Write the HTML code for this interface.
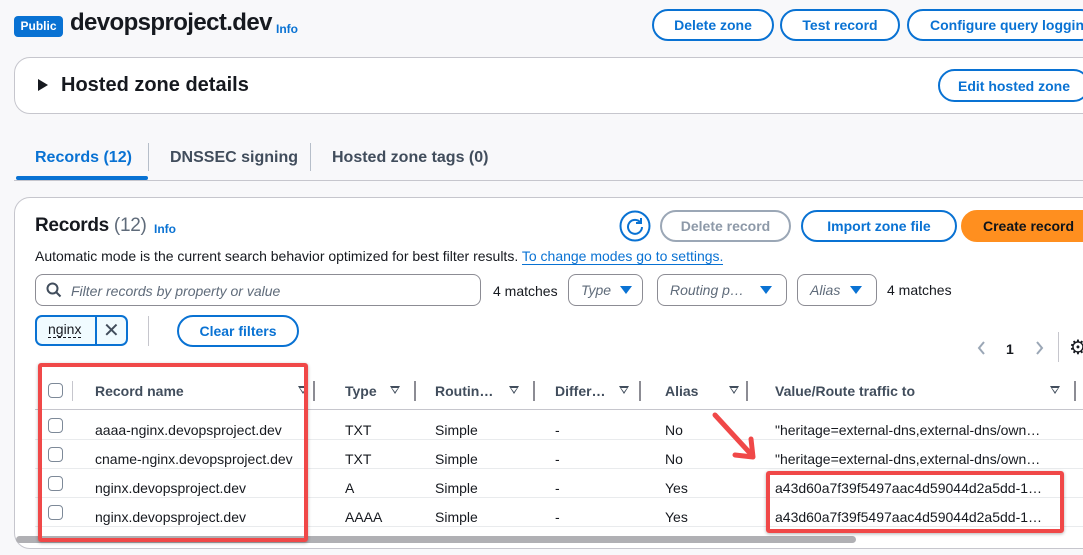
<!DOCTYPE html>
<html><head><meta charset="utf-8"><style>
*{box-sizing:border-box;margin:0;padding:0}
body{width:1083px;height:555px;overflow:hidden;background:#f8f8fa;font-family:"Liberation Sans",sans-serif;color:#16191f;position:relative}
.a{position:absolute;white-space:nowrap}
.btn{position:absolute;border:2px solid #0972d3;border-radius:20px;color:#0972d3;font-weight:bold;font-size:14px;display:flex;align-items:center;justify-content:center;background:#fff}
.card{position:absolute;background:#fff;border:1px solid #c6c6cd;border-radius:16px}
.sel{position:absolute;border:1px solid #8c8c94;border-radius:8px;background:#fff;font-style:italic;color:#5f6b7a;font-size:14px;padding-left:12px;display:flex;align-items:center}
.tri{position:absolute;width:0;height:0;border-left:6px solid transparent;border-right:6px solid transparent;border-top:8px solid #0972d3}
.cb{position:absolute;width:15px;height:15px;border:1.5px solid #7d8998;border-radius:4px;background:#fff}
.th{position:absolute;font-weight:bold;font-size:14px;color:#414d5c;top:383px}
.sep{position:absolute;width:2px;height:20px;background:#8c8c94;top:381px}
.so{position:absolute;top:386px;width:0;height:0;border-left:5px solid transparent;border-right:5px solid transparent;border-top:8px solid #414d5c}
.so::after{content:"";position:absolute;left:-3px;top:-6.5px;border-left:3px solid transparent;border-right:3px solid transparent;border-top:4.5px solid #fff}
.td{position:absolute;font-size:14px;color:#16191f}
.hl{position:absolute;height:1px;background:#e9ebed;left:35px;width:1048px}
</style></head><body>
<div class="a" style="left:14px;top:16px;width:49px;height:21px;background:#0972d3;border-radius:4px;color:#fff;font-size:12px;font-weight:bold;text-align:center;line-height:21px">Public</div>
<div class="a" style="left:70px;top:9px;font-size:24px;font-weight:bold;letter-spacing:-0.6px">devopsproject.dev</div>
<div class="a" style="left:276px;top:22px;font-size:12px;font-weight:bold;color:#0972d3">Info</div>
<div class="btn" style="left:652px;top:9px;width:122px;height:32px">Delete zone</div>
<div class="btn" style="left:780px;top:9px;width:120px;height:32px">Test record</div>
<div class="btn" style="left:907px;top:9px;width:190px;height:32px;justify-content:flex-start;padding-left:21px">Configure query logging</div>

<div class="card" style="left:14px;top:57px;width:1090px;height:57px"></div>
<div class="a" style="left:38px;top:79px;width:0;height:0;border-top:6px solid transparent;border-bottom:6px solid transparent;border-left:10px solid #16191f"></div>
<div class="a" style="left:61px;top:74px;font-size:20px;font-weight:bold">Hosted zone details</div>
<div class="btn" style="left:938px;top:69px;width:152px;height:33px">Edit hosted zone</div>

<div class="a" style="left:35px;top:149px;font-size:16px;font-weight:bold;color:#0972d3">Records (12)</div>
<div class="a" style="left:148px;top:143px;width:1px;height:28px;background:#b6bec9"></div>
<div class="a" style="left:170px;top:149px;font-size:16px;font-weight:bold;color:#414d5c">DNSSEC signing</div>
<div class="a" style="left:310px;top:143px;width:1px;height:28px;background:#b6bec9"></div>
<div class="a" style="left:332px;top:149px;font-size:16px;font-weight:bold;color:#414d5c">Hosted zone tags (0)</div>
<div class="a" style="left:14px;top:180px;width:1069px;height:1px;background:#c6c6cd"></div>
<div class="a" style="left:16px;top:176px;width:132px;height:4px;background:#0972d3;border-radius:2px"></div>

<div class="card" style="left:14px;top:197px;width:1090px;height:352px"></div>
<div class="a" style="left:35px;top:215px;font-size:19px;font-weight:bold;letter-spacing:-0.3px">Records <span style="font-weight:normal;color:#5f6b7a">(12)</span></div>
<div class="a" style="left:154px;top:222px;font-size:12px;font-weight:bold;color:#0972d3">Info</div>
<svg class="a" style="left:619px;top:210px" width="32" height="32" viewBox="0 0 32 32"><circle cx="16" cy="16" r="14.5" fill="#fff" stroke="#0972d3" stroke-width="2"/><path d="M21.5 12.5A7 7 0 1 0 23 17" fill="none" stroke="#0972d3" stroke-width="2"/><path d="M22 8v5h-5" fill="none" stroke="#0972d3" stroke-width="2"/></svg>
<div class="btn" style="left:660px;top:210px;width:131px;height:32px;border-color:#9ba7b6;color:#8d99a8">Delete record</div>
<div class="btn" style="left:801px;top:210px;width:156px;height:32px">Import zone file</div>
<div class="btn" style="left:961px;top:210px;width:140px;height:32px;background:#ff8f1f;border-color:#ff8f1f;color:#0f141a;justify-content:flex-start;padding-left:20px">Create record</div>
<div class="a" style="left:35px;top:248px;font-size:14px;color:#16191f">Automatic mode is the current search behavior optimized for best filter results. <span style="color:#0972d3;border-bottom:1px solid #0972d3">To change modes go to settings.</span></div>

<div class="a" style="left:35px;top:274px;width:446px;height:32px;border:1px solid #8c8c94;border-radius:8px;background:#fff"></div>
<svg class="a" style="left:46px;top:282px" width="16" height="16" viewBox="0 0 16 16"><circle cx="6.5" cy="6.5" r="5" fill="none" stroke="#414d5c" stroke-width="2"/><path d="M10 10l4.5 4.5" stroke="#414d5c" stroke-width="2"/></svg>
<div class="a" style="left:71px;top:283px;font-size:14px;font-style:italic;color:#5f6b7a">Filter records by property or value</div>
<div class="a" style="left:493px;top:283px;font-size:14px">4 matches</div>
<div class="sel" style="left:568px;top:274px;width:75px;height:32px">Type</div><div class="tri" style="left:620px;top:286px"></div>
<div class="sel" style="left:657px;top:274px;width:130px;height:32px">Routing p…</div><div class="tri" style="left:760px;top:286px"></div>
<div class="sel" style="left:797px;top:274px;width:80px;height:32px">Alias</div><div class="tri" style="left:850px;top:286px"></div>
<div class="a" style="left:887px;top:282px;font-size:14px">4 matches</div>

<div class="a" style="left:35px;top:315px;width:93px;height:31px;border:2px solid #0972d3;border-radius:7px;background:#f0fbff"></div>
<div class="a" style="left:95px;top:317px;width:2px;height:27px;background:#0972d3"></div>
<div class="a" style="left:48px;top:321px;font-size:14px;border-bottom:1px dashed #16191f;line-height:16px">nginx</div>
<div class="a" style="left:103px;top:318px;font-size:20px;color:#414d5c">✕</div>
<div class="a" style="left:148px;top:316px;width:1px;height:30px;background:#c6c6cd"></div>
<div class="btn" style="left:177px;top:315px;width:122px;height:32px">Clear filters</div>

<svg class="a" style="left:977px;top:340px" width="70" height="16" viewBox="0 0 70 16"><path d="M7 2L2 8l5 6" fill="none" stroke="#9ba7b6" stroke-width="2"/><path d="M60 2l5 6-5 6" fill="none" stroke="#9ba7b6" stroke-width="2"/></svg>
<div class="a" style="left:1006px;top:341px;font-size:14px;font-weight:bold">1</div>
<div class="a" style="left:1058px;top:332px;width:1px;height:30px;background:#c6c6cd"></div>
<div class="a" style="left:1069px;top:335px;font-size:20px;color:#16191f">⚙</div>

<div class="cb" style="left:48px;top:383px"></div>
<div class="sep" style="left:72px;width:1px;background:#c6c6cd"></div>
<div class="th" style="left:95px">Record name</div><div class="so" style="left:298px"></div><div class="sep" style="left:313px"></div>
<div class="th" style="left:345px">Type</div><div class="so" style="left:390px"></div><div class="sep" style="left:414px"></div>
<div class="th" style="left:435px">Routin…</div><div class="so" style="left:509px"></div><div class="sep" style="left:533px"></div>
<div class="th" style="left:555px">Differ…</div><div class="so" style="left:619px"></div><div class="sep" style="left:639px"></div>
<div class="th" style="left:665px">Alias</div><div class="so" style="left:729px"></div><div class="sep" style="left:746px"></div>
<div class="th" style="left:775px">Value/Route traffic to</div><div class="so" style="left:1050px"></div><div class="sep" style="left:1074px"></div>
<div class="hl" style="top:409px;background:#c6c6cd"></div>

<div class="cb" style="left:48px;top:418px"></div><div class="td" style="left:95px;top:422px">aaaa-nginx.devopsproject.dev</div><div class="td" style="left:345px;top:422px">TXT</div><div class="td" style="left:435px;top:422px">Simple</div><div class="td" style="left:555px;top:422px">-</div><div class="td" style="left:665px;top:422px">No</div><div class="td" style="left:775px;top:422px">"heritage=external-dns,external-dns/own…</div>
<div class="hl" style="top:439px"></div>
<div class="cb" style="left:48px;top:447px"></div><div class="td" style="left:95px;top:451px">cname-nginx.devopsproject.dev</div><div class="td" style="left:345px;top:451px">TXT</div><div class="td" style="left:435px;top:451px">Simple</div><div class="td" style="left:555px;top:451px">-</div><div class="td" style="left:665px;top:451px">No</div><div class="td" style="left:775px;top:451px">"heritage=external-dns,external-dns/own…</div>
<div class="hl" style="top:468px"></div>
<div class="cb" style="left:48px;top:476px"></div><div class="td" style="left:95px;top:480px">nginx.devopsproject.dev</div><div class="td" style="left:345px;top:480px">A</div><div class="td" style="left:435px;top:480px">Simple</div><div class="td" style="left:555px;top:480px">-</div><div class="td" style="left:665px;top:480px">Yes</div><div class="td" style="left:775px;top:480px">a43d60a7f39f5497aac4d59044d2a5dd-1…</div>
<div class="hl" style="top:497px"></div>
<div class="cb" style="left:48px;top:505px"></div><div class="td" style="left:95px;top:509px">nginx.devopsproject.dev</div><div class="td" style="left:345px;top:509px">AAAA</div><div class="td" style="left:435px;top:509px">Simple</div><div class="td" style="left:555px;top:509px">-</div><div class="td" style="left:665px;top:509px">Yes</div><div class="td" style="left:775px;top:509px">a43d60a7f39f5497aac4d59044d2a5dd-1…</div>
<div class="hl" style="top:526px"></div>
<div class="a" style="left:16px;top:536px;width:840px;height:7px;background:#b0b0b4;border-radius:4px"></div>

<div class="a" style="left:38px;top:363px;width:270px;height:179px;border:4px solid #f04848;border-radius:3px;box-shadow:0 1px 3px rgba(0,0,0,.3)"></div>
<div class="a" style="left:766px;top:471px;width:298px;height:62px;border:4px solid #f04848;border-radius:3px;box-shadow:0 1px 3px rgba(0,0,0,.3)"></div>
<svg class="a" style="left:705px;top:405px" width="60" height="60" viewBox="0 0 60 60"><path d="M10 10L44 47" stroke="#f04848" stroke-width="5" stroke-linecap="round"/><path d="M30 50L48 52L46 34" fill="none" stroke="#f04848" stroke-width="5" stroke-linecap="round" stroke-linejoin="round"/></svg>
</body></html>
